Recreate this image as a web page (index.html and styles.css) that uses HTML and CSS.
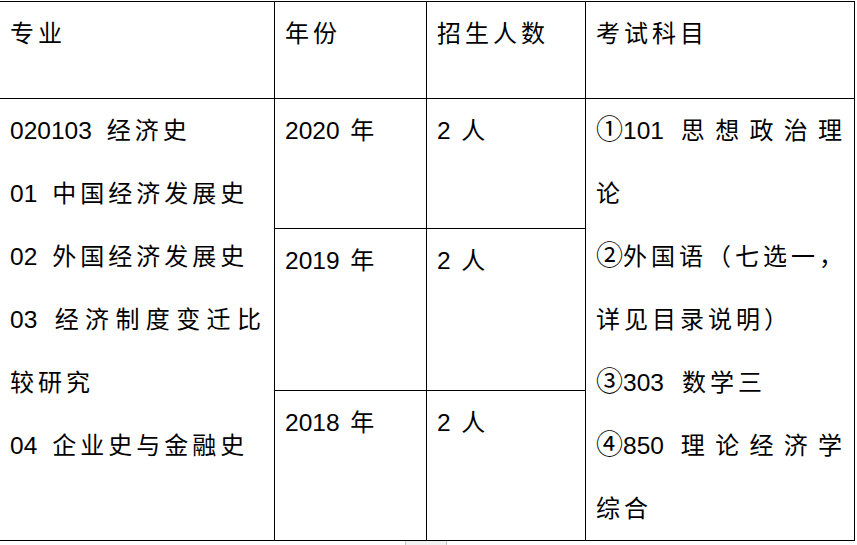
FILE: index.html
```html
<!DOCTYPE html>
<html lang="zh-CN">
<head>
<meta charset="utf-8">
<title>专业招生表</title>
<link rel="stylesheet" href="styles.css">
</head>
<body>
<div class="sheet">
  <div class="cell head col1 c1">专业</div>
  <div class="cell head col2">年份</div>
  <div class="cell head col3">招生人数</div>
  <div class="cell head col4 c4">考试科目</div>

  <div class="cell col1 c1 tall">
    <div class="ln"><span class="n sp">020103</span>经济史</div>
    <div class="ln"><span class="n sp">01</span>中国经济发展史</div>
    <div class="ln"><span class="n sp">02</span>外国经济发展史</div>
    <div class="ln jus"><span class="n sp">03</span>经济制度变迁比</div>
    <div class="ln">较研究</div>
    <div class="ln"><span class="n sp">04</span>企业史与金融史</div>
  </div>

  <div class="cell col2 r2"><div class="ln"><span class="n">2020</span> 年</div></div>
  <div class="cell col3 r2"><div class="ln"><span class="n">2</span> 人</div></div>

  <div class="cell col4 c4 tall">
    <div class="ln jus"><span class="lead"><span class="circ">①</span><span class="n">101</span></span> 思想政治理</div>
    <div class="ln">论</div>
    <div class="ln"><span class="circ">②</span>外国语（七选一，</div>
    <div class="ln">详见目录说明）</div>
    <div class="ln"><span class="circ">③</span><span class="n sp2">303</span>数学三</div>
    <div class="ln jus"><span class="lead"><span class="circ">④</span><span class="n">850</span></span> 理论经济学</div>
    <div class="ln">综合</div>
  </div>

  <div class="cell col2 r3"><div class="ln"><span class="n">2019</span> 年</div></div>
  <div class="cell col3 r3"><div class="ln"><span class="n">2</span> 人</div></div>

  <div class="cell col2 r4"><div class="ln"><span class="n">2018</span> 年</div></div>
  <div class="cell col3 r4"><div class="ln"><span class="n">2</span> 人</div></div>
</div>
<div class="foot"><div class="mark"></div></div>
</body>
</html>
```

FILE: styles.css
```css
html, body {
  margin: 0;
  padding: 0;
  background: #ffffff;
}

body {
  padding-top: 1px;
  font-family: "Liberation Sans", "Noto Sans CJK SC", sans-serif;
  color: #000;
}

.sheet {
  display: grid;
  grid-template-columns: 275px 152px 159px 269px;
  grid-template-rows: 97px 130px 162px 150px;
  width: 855px;
  border-top: 1px solid #000;
}

.cell {
  box-sizing: border-box;
  border-right: 1px solid #000;
  border-bottom: 1px solid #000;
  padding: 0 8px 0 10px;
  font-size: 24px;
  line-height: 63px;
  letter-spacing: 4px;
  white-space: nowrap;
  overflow: hidden;
}

.col1 { grid-column: 1; }
.col2 { grid-column: 2; }
.col3 { grid-column: 3; }
.col4 { grid-column: 4; }

.head { grid-row: 1; }
.r2 { grid-row: 2; }
.r3 { grid-row: 3; }
.r4 { grid-row: 4; }
.tall { grid-row: 2 / span 3; }

.c1 {
  padding-left: 10px;
  padding-right: 9px;
}

.c4 {
  padding-left: 10px;
  padding-right: 8px;
}

.ln {
  height: 63px;
}

.jus {
  text-align: justify;
  text-align-last: justify;
  white-space: normal;
}

.lead {
  display: inline-block;
}

.n {
  font-family: "Liberation Sans", sans-serif;
  font-size: 24.5px;
  letter-spacing: 0;
}

.sp {
  margin-right: 15px;
}

.sp2 {
  margin-right: 18px;
}

.circ {
  font-family: "Noto Sans CJK SC", sans-serif;
  font-size: 27px;
  letter-spacing: 0;
  line-height: 1;
  margin-right: 0;
}

.foot {
  height: 4px;
}

.mark {
  margin-left: 405px;
  width: 40px;
  height: 4px;
  background: #f2f2f2;
  border-left: 1px solid #c8c8c8;
  border-right: 1px solid #c8c8c8;
}
```
